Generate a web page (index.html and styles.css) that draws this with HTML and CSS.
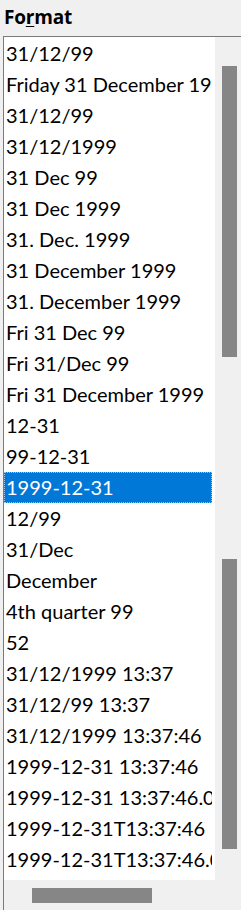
FILE: index.html
```html
<!DOCTYPE html>
<html>
<head>
<meta charset="utf-8">
<link rel="stylesheet" href="styles.css">
</head>
<body>
<div class="title">Fo<span class="mn">r</span>mat</div>
<div class="listbox">
  <div class="items">
    <div class="item">31/12/99</div>
    <div class="item">Friday 31 December 1999</div>
    <div class="item">31/12/99</div>
    <div class="item">31/12/1999</div>
    <div class="item">31 Dec 99</div>
    <div class="item">31 Dec 1999</div>
    <div class="item">31. Dec. 1999</div>
    <div class="item">31 December 1999</div>
    <div class="item">31. December 1999</div>
    <div class="item">Fri 31 Dec 99</div>
    <div class="item">Fri 31/Dec 99</div>
    <div class="item">Fri 31 December 1999</div>
    <div class="item">12-31</div>
    <div class="item">99-12-31</div>
    <div class="item selected">1999-12-31</div>
    <div class="item">12/99</div>
    <div class="item">31/Dec</div>
    <div class="item">December</div>
    <div class="item">4th quarter 99</div>
    <div class="item">52</div>
    <div class="item">31/12/1999 13:37</div>
    <div class="item">31/12/99 13:37</div>
    <div class="item">31/12/1999 13:37:46</div>
    <div class="item">1999-12-31 13:37:46</div>
    <div class="item">1999-12-31 13:37:46.00</div>
    <div class="item">1999-12-31T13:37:46</div>
    <div class="item">1999-12-31T13:37:46.00</div>
  </div>
  <div class="vscroll">
    <div class="vthumb t1"></div>
    <div class="vthumb t2"></div>
  </div>
  <div class="hscroll">
    <div class="hthumb"></div>
  </div>
  <div class="corner"></div>
</div>
</body>
</html>
```
FILE: styles.css
```css
html, body {
  margin: 0;
  padding: 0;
  background: #f0f0f0;
  height: 910px;
  overflow: hidden;
}
body {
  font-family: "Open Sans", "Noto Sans", sans-serif;
  color: #000;
}
.title {
  font-weight: bold;
  font-size: 19px;
  line-height: 20px;
  padding: 7px 0 0 4px;
  height: 29px;
  box-sizing: border-box;
  letter-spacing: -0.2px;
}
.mn {
  text-decoration: underline;
  text-underline-offset: 2px;
  text-decoration-thickness: 1px;
}
.listbox {
  margin-left: 3px;
  margin-top: 7px;
  border-left: 1px solid #7a7a7a;
  border-top: 1px solid #7a7a7a;
  display: grid;
  grid-template-columns: 211px 26px;
  grid-template-rows: 843px 30px;
  height: 873px;
}
.items {
  background: #fff;
  padding-top: 1px;
  overflow: hidden;
}
.item {
  height: 31px;
  line-height: 31px;
  font-family: "Lato", "Open Sans", sans-serif;
  font-size: 20px;
  padding-left: 2px;
  white-space: nowrap;
  overflow: hidden;
  width: 208px;
  box-sizing: border-box;
}
.item.selected {
  background: #0078d7;
  color: #fff;
  outline: 1px dotted #9cc3ea;
  outline-offset: -1px;
}
.vscroll {
  background: #f0f0f0;
  display: flex;
  flex-direction: column;
  padding-top: 29px;
  gap: 202px;
  align-items: flex-start;
  padding-left: 7px;
}
.vthumb {
  width: 15px;
  background: #868686;
}
.t1 { height: 291px; }
.t2 { height: 290px; }
.hscroll {
  background: #f0f0f0;
  padding: 8px 0 0 28px;
}
.hthumb {
  width: 120px;
  height: 15px;
  background: #868686;
}
.corner {
  background: #f0f0f0;
}
```
